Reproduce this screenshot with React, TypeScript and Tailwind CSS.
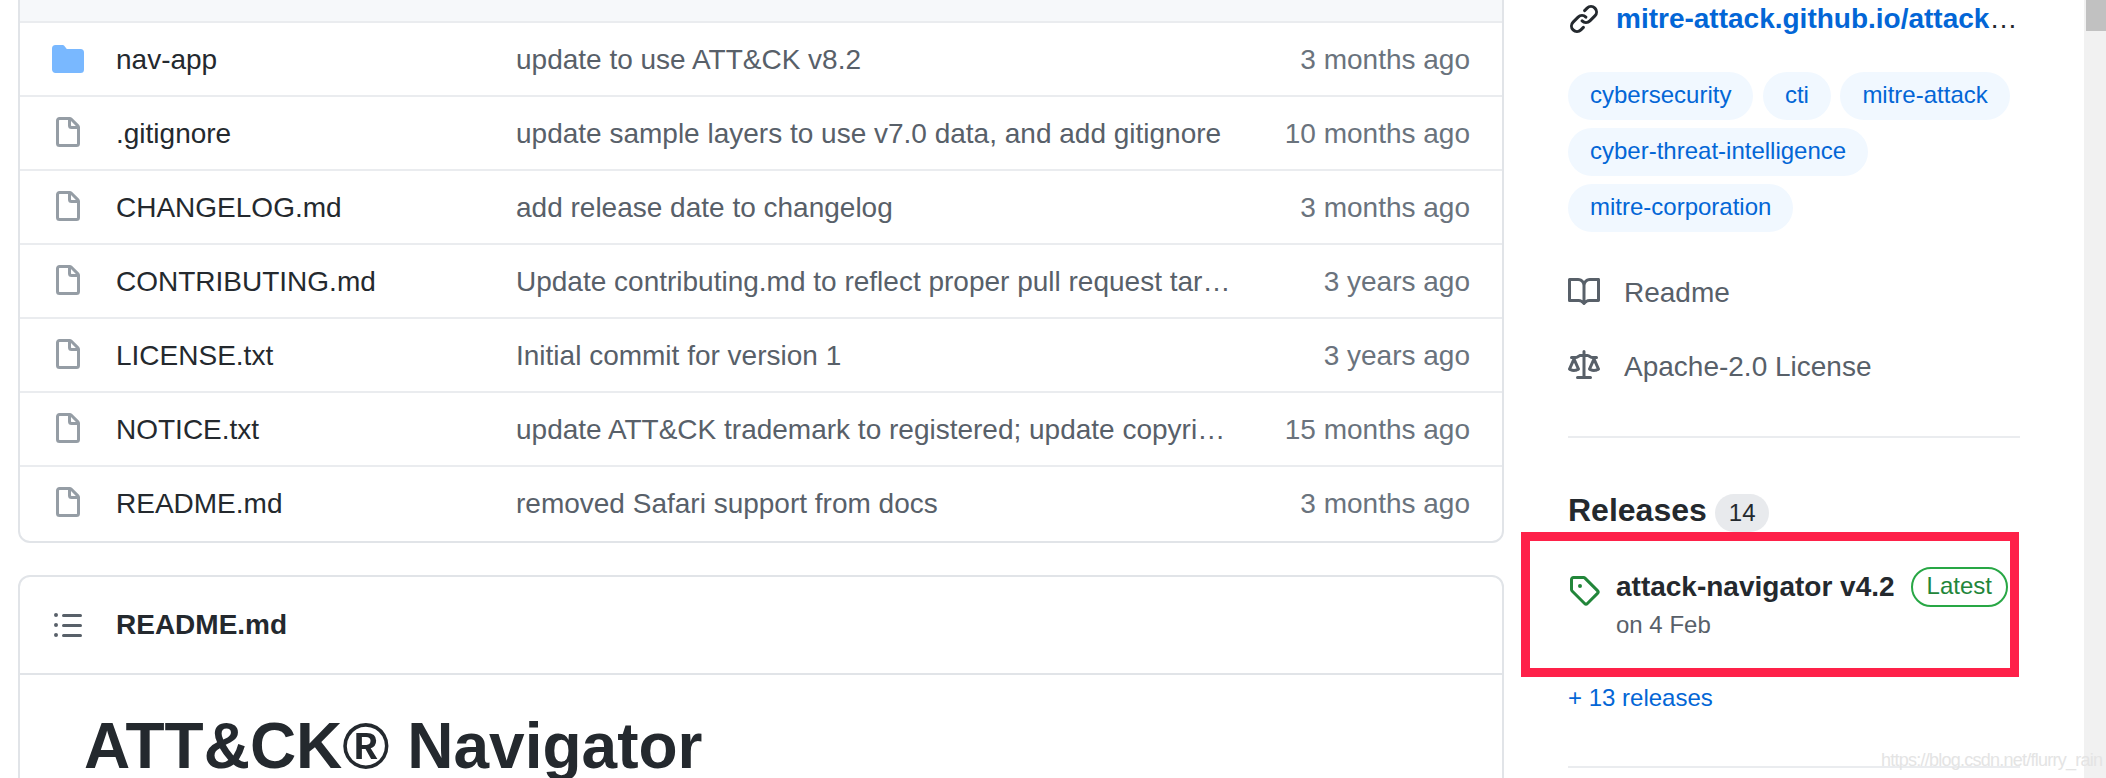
type FileRow = {
  name: string;
  message: string;
  age: string;
  folder?: boolean;
};

const files: FileRow[] = [
  { name: "nav-app", message: "update to use ATT&CK v8.2", age: "3 months ago", folder: true },
  { name: ".gitignore", message: "update sample layers to use v7.0 data, and add gitignore", age: "10 months ago" },
  { name: "CHANGELOG.md", message: "add release date to changelog", age: "3 months ago" },
  { name: "CONTRIBUTING.md", message: "Update contributing.md to reflect proper pull request target branch", age: "3 years ago" },
  { name: "LICENSE.txt", message: "Initial commit for version 1", age: "3 years ago" },
  { name: "NOTICE.txt", message: "update ATT&CK trademark to registered; update copyright year", age: "15 months ago" },
  { name: "README.md", message: "removed Safari support from docs", age: "3 months ago" },
];

const topics = [
  "cybersecurity",
  "cti",
  "mitre-attack",
  "cyber-threat-intelligence",
  "mitre-corporation",
];

// 16px octicons, drawn at twice their size like the rest of the page
const paths = {
  file: "M3.75 1.5a.25.25 0 00-.25.25v11.5c0 .138.112.25.25.25h8.5a.25.25 0 00.25-.25V6H9.75A1.75 1.75 0 018 4.25V1.5H3.75zm5.75.56v2.19c0 .138.112.25.25.25h2.19L9.5 2.06zM2 1.75C2 .784 2.784 0 3.75 0h5.086c.464 0 .909.184 1.237.513l3.414 3.414c.329.328.513.773.513 1.237v8.086A1.75 1.75 0 0112.25 15h-8.5A1.75 1.75 0 012 13.25V1.75z",
  folder: "M1.75 1A1.75 1.75 0 000 2.75v10.5C0 14.216.784 15 1.75 15h12.5A1.75 1.75 0 0016 13.25v-8.5A1.75 1.75 0 0014.25 3H7.5a.25.25 0 01-.2-.1l-.9-1.2C6.07 1.26 5.55 1 5 1H1.75z",
  book: "M0 1.75A.75.75 0 01.75 1h4.253c1.227 0 2.317.59 3 1.501A3.744 3.744 0 0111.006 1h4.245a.75.75 0 01.75.75v10.5a.75.75 0 01-.75.75h-4.507a2.25 2.25 0 00-1.591.659l-.622.621a.75.75 0 01-1.06 0l-.622-.621A2.25 2.25 0 005.258 13H.75a.75.75 0 01-.75-.75V1.75zm8.755 3a2.25 2.25 0 012.25-2.25H14.5v9h-3.757c-.71 0-1.4.201-1.992.572l.004-7.322zm-1.504 7.324l.004-5.073-.002-2.253A2.25 2.25 0 005.003 2.5H1.5v9h3.757a3.75 3.75 0 011.994.574z",
  law: "M8.75.75a.75.75 0 00-1.5 0V2h-.984c-.305 0-.604.08-.869.23l-1.288.737A.25.25 0 013.984 3H1.75a.75.75 0 000 1.5h.428L.066 9.192a.75.75 0 00.154.838l.53-.53-.53.53v.001l.002.002.002.002.006.006.016.015.045.04a3.514 3.514 0 00.686.45A4.492 4.492 0 003 11c.88 0 1.556-.22 2.023-.454a3.515 3.515 0 00.686-.45l.045-.04.016-.015.006-.006.002-.002.001-.002L5.25 9.5l.53.53a.75.75 0 00.154-.838L3.822 4.5h.162c.305 0 .604-.08.869-.23l1.289-.737a.25.25 0 01.124-.033h.984V13h-2.5a.75.75 0 000 1.5h6.5a.75.75 0 000-1.5h-2.5V3.5h.984a.25.25 0 01.124.033l1.29.736c.264.152.563.231.868.231h.162l-2.112 4.692a.75.75 0 00.154.838l.53-.53-.53.53v.001l.002.002.002.002.006.006.016.015.045.04a3.517 3.517 0 00.686.45A4.492 4.492 0 0013 11c.88 0 1.556-.22 2.023-.454a3.512 3.512 0 00.686-.45l.045-.04.01-.01.006-.005.006-.006.002-.002.001-.002-.529-.531.53.53a.75.75 0 00.154-.838L13.823 4.5h.427a.75.75 0 000-1.5h-2.234a.25.25 0 01-.124-.033l-1.29-.736A1.75 1.75 0 009.735 2H8.75V.75zM1.695 9.227c.285.135.718.273 1.305.273s1.02-.138 1.305-.273L3 6.327l-1.305 2.9zm10 0c.285.135.718.273 1.305.273s1.02-.138 1.305-.273L13 6.327l-1.305 2.9z",
  tag: "M2.5 7.775V2.75a.25.25 0 01.25-.25h5.025a.25.25 0 01.177.073l6.25 6.25a.25.25 0 010 .354l-5.025 5.025a.25.25 0 01-.354 0l-6.25-6.25a.25.25 0 01-.073-.177zm-1.5 0V2.75C1 1.784 1.784 1 2.75 1h5.025c.464 0 .91.184 1.238.513l6.25 6.25a1.75 1.75 0 010 2.474l-5.026 5.026a1.75 1.75 0 01-2.474 0l-6.25-6.25A1.75 1.75 0 011 7.775zM6 5a1 1 0 100 2 1 1 0 000-2z",
  link: "M7.775 3.275a.75.75 0 001.06 1.06l1.25-1.25a2 2 0 112.83 2.83l-2.5 2.5a2 2 0 01-2.83 0 .75.75 0 00-1.06 1.06 3.5 3.5 0 004.95 0l2.5-2.5a3.5 3.5 0 00-4.95-4.95l-1.25 1.25zm-4.69 9.64a2 2 0 010-2.83l2.5-2.5a2 2 0 012.83 0 .75.75 0 001.06-1.06 3.5 3.5 0 00-4.95 0l-2.5 2.5a3.5 3.5 0 004.95 4.95l1.25-1.25a.75.75 0 00-1.06-1.06l-1.25 1.25a2 2 0 01-2.83 0z",
  list: "M2 4a1 1 0 100-2 1 1 0 000 2zm3.75-1.5a.75.75 0 000 1.5h8.5a.75.75 0 000-1.5h-8.5zm0 5a.75.75 0 000 1.5h8.5a.75.75 0 000-1.5h-8.5zm0 5a.75.75 0 000 1.5h8.5a.75.75 0 000-1.5h-8.5zM3 8a1 1 0 11-2 0 1 1 0 012 0zm-1 6a1 1 0 100-2 1 1 0 000 2z",
};

function Octicon({ name, className }: { name: keyof typeof paths; className?: string }) {
  return (
    <svg viewBox="0 0 16 16" width={32} height={32} fill="currentColor" className={className}>
      <path fillRule="evenodd" d={paths[name]} />
    </svg>
  );
}

export default function App() {
  return (
    <div className="flex h-[778px] overflow-hidden bg-white pl-[18px] font-['Liberation_Sans',Arial,sans-serif] text-[28px] leading-[42px] text-[#24292e]">
      <main className="-mt-[53px] w-[1486px] shrink-0">
        <div className="overflow-hidden rounded-xl border-2 border-[#e1e4e8]">
          <div className="flex h-[74px] items-center border-b-2 border-[#eaecef] bg-[#f6f8fa] pr-[32px] pl-[96px]">
            <div className="w-[400px]">layers</div>
            <div className="w-[716px] text-[#586069]">Merge branch</div>
            <div className="flex-1 text-right text-[#6a737d]">3 months ago</div>
          </div>

          {files.map((file) => (
            <div
              key={file.name}
              className="flex h-[74px] items-center border-b-2 border-[#eaecef] pr-[32px] pl-[32px] last:border-b-transparent"
            >
              <div className="mr-[32px] flex w-[32px] justify-center">
                {file.folder ? (
                  <Octicon name="folder" className="text-[#79b8ff]" />
                ) : (
                  <Octicon name="file" className="text-[#959da5]" />
                )}
              </div>
              <div className="w-[400px] pt-[2px]">{file.name}</div>
              <div className="w-[716px] truncate pt-[2px] text-[#586069]">{file.message}</div>
              <div className="flex-1 pt-[2px] text-right whitespace-nowrap text-[#6a737d]">{file.age}</div>
            </div>
          ))}
        </div>

        <div className="mt-[32px] rounded-t-xl border-2 border-[#e1e4e8] pb-10">
          <div className="flex h-[98px] items-center border-b-2 border-[#e1e4e8] pl-[32px]">
            <Octicon name="list" className="mr-[32px] text-[#586069]" />
            <span className="font-bold">README.md</span>
          </div>
          <h1 className="px-[64px] pt-[31px] text-[64px] leading-[80px] font-bold">ATT&amp;CK® Navigator</h1>
        </div>
      </main>

      <aside className="ml-[64px] w-[452px] shrink-0 -mt-[2px]">
        <div className="flex items-center gap-4">
          <Octicon name="link" className="shrink-0" />
          <div className="min-w-0 truncate">
            <span className="font-bold text-[#0366d6]">mitre-attack.github.io/attack-navigator/</span>
          </div>
        </div>

        <div className="mt-[32px] flex flex-wrap gap-x-[9.5px] gap-y-2">
          {topics.map((topic) => (
            <span
              key={topic}
              className="h-[48px] rounded-full bg-[#f1f8ff] px-[22px] text-[24px] leading-[46px] text-[#0366d6]"
            >
              {topic}
            </span>
          ))}
        </div>

        <div className="mt-[39px] flex items-center gap-6 text-[#586069]">
          <Octicon name="book" />
          <span className="pt-[2px] leading-[40px]">Readme</span>
        </div>
        <div className="mt-[32px] flex items-center gap-6 text-[#586069]">
          <Octicon name="law" />
          <span className="pt-[2px] leading-[40px]">Apache-2.0 License</span>
        </div>

        <div className="mt-[49px] h-[2px] bg-[#eaecef]" />

        <div className="mt-[52px] flex items-baseline gap-2">
          <h2 className="text-[32px] leading-[40px] font-bold">Releases</h2>
          <span className="rounded-full bg-[#e8eaed] px-[14px] text-[24px] leading-[38px]">14</span>
        </div>

        <div className="mt-[34px] flex items-start gap-4">
          <Octicon name="tag" className="mt-2 shrink-0 text-[#22863a]" />
          <div>
            <div className="flex items-center gap-4">
              <span className="font-bold whitespace-nowrap">attack-navigator v4.2</span>
              <span className="h-[40px] rounded-full border-2 border-[#28a745] px-[14px] text-[24px] leading-[34px] text-[#22863a]">
                Latest
              </span>
            </div>
            <div className="-mt-[1px] text-[24px] leading-[36px] text-[#586069]">on 4 Feb</div>
          </div>
        </div>

        <div className="mt-[37px] text-[24px] leading-[36px] text-[#0366d6]">+ 13 releases</div>

        <div className="mt-[50px] h-[2px] bg-[#eaecef]" />
      </aside>

      {/* page scrollbar */}
      <div className="ml-[64px] h-full w-[22px] shrink-0 bg-[#f1f1f1] pl-[2px]">
        <div className="h-[31px] bg-[#c1c1c1]" />
      </div>

      {/* annotation box drawn over the screenshot */}
      <div className="absolute top-[532px] left-[1521px] h-[145px] w-[498px] border-[9px] border-[#fe2149]" />

      <div className="absolute top-[749px] left-[1881px] text-[18px] leading-[22px] tracking-[-0.75px] text-[#e4e4e4]">
        https://blog.csdn.net/flurry_rain
      </div>
    </div>
  );
}
